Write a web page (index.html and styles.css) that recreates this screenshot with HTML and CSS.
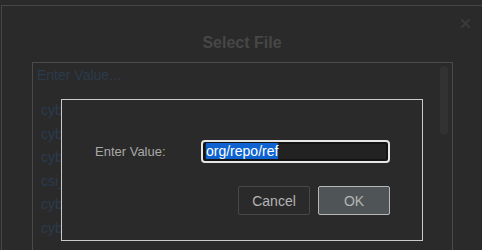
FILE: index.html
```html
<!DOCTYPE html>
<html lang="en">
<head>
  <meta charset="UTF-8">
  <meta name="viewport" content="width=device-width, initial-scale=1.0">
  <title>Select File</title>
  <link rel="stylesheet" href="styles.css">
</head>
<body>

  <!-- background panel: file picker -->
  <div class="panel">
    <span class="close">
      <svg width="9" height="9" viewBox="0 0 9 9"><path d="M1 1 L8 8 M8 1 L1 8" stroke="#3a3a3a" stroke-width="2" stroke-linecap="square"/></svg>
    </span>
    <h2 class="title">Select File</h2>
    <div class="listbox">
      <div class="filter">Enter Value...</div>
      <ul class="items">
        <li>cybertron/arm-bundles</li>
        <li>cybertron/bootloader</li>
        <li>cybertron/kernel-src</li>
        <li>csi_drivers/camera</li>
        <li>cybertron/tools</li>
        <li>cybertron/firmware</li>
      </ul>
      <div class="thumb"></div>
    </div>
  </div>

  <!-- prompt dialog on top -->
  <div class="dialog">
    <div class="row">
      <label class="label">Enter Value:</label>
      <div class="value"><span class="sel">org/repo/ref</span></div>
    </div>
    <div class="actions">
      <button class="btn">Cancel</button>
      <button class="btn primary">OK</button>
    </div>
  </div>

</body>
</html>
```

FILE: styles.css
```css
body {
  margin: 0;
  background: #2a2a2a;
  font-family: "Liberation Sans", Arial, sans-serif;
  height: 250px;
  overflow: hidden;
}
.panel {
  position: relative;
  margin: 5px 0 0 1px;
  border-top: 1px solid #464646;
  border-left: 1px solid #464646;
  height: 244px;
  overflow: hidden;
}
.close {
  position: absolute;
  top: 13px;
  right: 12px;
  line-height: 0;
}
.title {
  margin: 0;
  padding-top: 27px;
  height: 29px;
  line-height: 20px;
  text-align: center;
  font-size: 16px;
  color: #474747;
}
.listbox {
  position: relative;
  margin: 0 29px 0 30px;
  border: 1px solid #4a4a4a;
  height: 220px;
}
.filter {
  height: 24px;
  line-height: 24px;
  padding-left: 4px;
  font-size: 14px;
  color: #2c3b4c;
}
.items {
  list-style: none;
  margin: 0;
  padding: 12px 0 0 8px;
}
.items li {
  height: 23.6px;
  line-height: 23.6px;
  font-size: 14px;
  color: #2a3b50;
  white-space: nowrap;
}
.thumb {
  position: absolute;
  top: 3px;
  right: 4px;
  width: 8px;
  height: 69px;
  border-radius: 4px;
  background: #323232;
}

.dialog {
  position: absolute;
  top: 99px;
  left: 61px;
  box-sizing: border-box;
  width: 362px;
  height: 142px;
  padding: 40px 32px 0 33px;
  border: 1px solid #c9c9c9;
  background: #2a2a2a;
}
.row {
  display: flex;
  align-items: center;
}
.label {
  width: 106px;
  font-size: 13px;
  color: #a8a8a8;
}
.value {
  box-sizing: border-box;
  width: 189px;
  height: 23px;
  padding: 2px 3px;
  border: 2px solid #e6e6e6;
  border-radius: 4px;
  box-shadow: inset 0 0 0 2px #141414;
  background: #222;
  font-size: 14px;
  line-height: 15px;
  color: #fff;
}
.sel {
  background: #0e63d0;
}
.actions {
  display: flex;
  justify-content: flex-end;
  gap: 8px;
  margin-top: 23px;
}
.btn {
  width: 72px;
  height: 29px;
  border: 1px solid #484848;
  border-radius: 2px;
  background: #2a2a2a;
  color: #b4b4b4;
  font-family: "Liberation Sans", Arial, sans-serif;
  font-size: 14px;
}
.btn.primary {
  background: #4f5557;
  border-color: #b8b8b8;
}
```
